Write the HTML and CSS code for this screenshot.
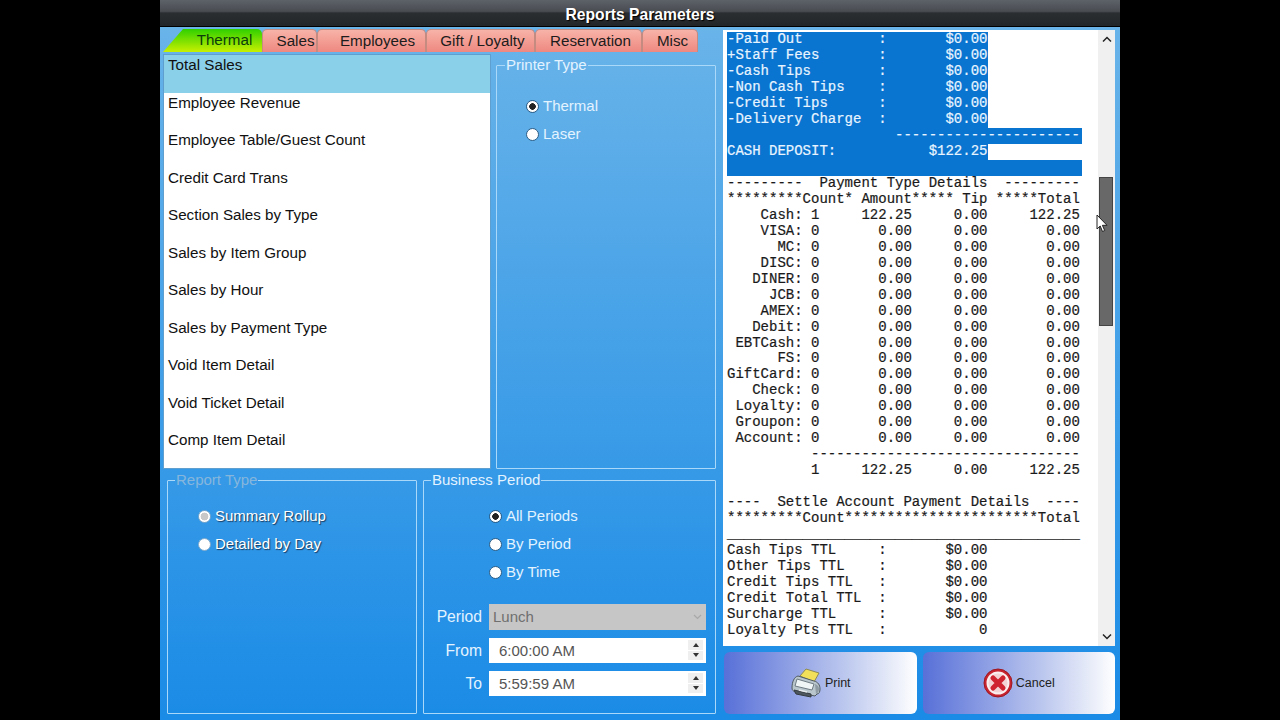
FILE: index.html
```html
<!DOCTYPE html>
<html lang="en">
<head>
    <meta charset="UTF-8">
    <title>Reports Parameters</title>
    <link rel="stylesheet" href="styles.css">
</head>
<body>
    <div class="app">
        <div class="title-bar">Reports Parameters</div>
        <div class="content">
            <div class="left-col">
                <div class="tabs">
                    <div class="tab tab-active">Thermal</div>
                    <div class="tab tab-sales">Sales</div>
                    <div class="tab tab-employees">Employees</div>
                    <div class="tab tab-gift">Gift / Loyalty</div>
                    <div class="tab tab-reservation">Reservation</div>
                    <div class="tab tab-misc">Misc</div>
                </div>
                <div class="top-row">
                    <ul class="report-list">
                        <li class="selected">Total Sales</li>
                        <li>Employee Revenue</li>
                        <li>Employee Table/Guest Count</li>
                        <li>Credit Card Trans</li>
                        <li>Section Sales by Type</li>
                        <li>Sales by Item Group</li>
                        <li>Sales by Hour</li>
                        <li>Sales by Payment Type</li>
                        <li>Void Item Detail</li>
                        <li>Void Ticket Detail</li>
                        <li>Comp Item Detail</li>
                    </ul>
                    <fieldset class="group group-printer">
                        <legend>Printer Type</legend>
                        <div class="radios">
                            <label class="radio"><input type="radio" name="printer" checked>Thermal</label>
                            <label class="radio"><input type="radio" name="printer">Laser</label>
                        </div>
                    </fieldset>
                </div>
                <div class="bottom-row">
                    <fieldset class="group group-report" disabled>
                        <legend>Report Type</legend>
                        <div class="radios">
                            <label class="radio"><input type="radio" name="report" checked>Summary Rollup</label>
                            <label class="radio"><input type="radio" name="report">Detailed by Day</label>
                        </div>
                    </fieldset>
                    <fieldset class="group group-period">
                        <legend>Business Period</legend>
                        <div class="radios">
                            <label class="radio"><input type="radio" name="period" checked>All Periods</label>
                            <label class="radio"><input type="radio" name="period">By Period</label>
                            <label class="radio"><input type="radio" name="period">By Time</label>
                        </div>
                        <div class="period-form">
                            <span class="form-label">Period</span>
                            <div class="select-box">
                                <span>Lunch</span>
                                <svg width="9" height="6" viewBox="0 0 9 6"><path d="M1 1l3.5 3.5L8 1" fill="none" stroke="#a8a8a8" stroke-width="1.2"/></svg>
                            </div>
                            <span class="form-label">From</span>
                            <div class="time-box">
                                <span>6:00:00 AM</span>
                                <div class="spinner"><i class="up"></i><i class="down"></i></div>
                            </div>
                            <span class="form-label">To</span>
                            <div class="time-box">
                                <span>5:59:59 AM</span>
                                <div class="spinner"><i class="up"></i><i class="down"></i></div>
                            </div>
                        </div>
                    </fieldset>
                </div>
            </div>
            <div class="right-col">
                <div class="receipt">
                    <div class="receipt-text"><span class="sel sel-a">-Paid Out         :       $0.00</span>
<span class="sel sel-a">+Staff Fees       :       $0.00</span>
<span class="sel sel-a">-Cash Tips        :       $0.00</span>
<span class="sel sel-a">-Non Cash Tips    :       $0.00</span>
<span class="sel sel-a">-Credit Tips      :       $0.00</span>
<span class="sel sel-a">-Delivery Charge  :       $0.00</span>
<span class="sel sel-b">                    ----------------------</span>
<span class="sel sel-a">CASH DEPOSIT:           $122.25</span>
<span class="sel sel-b"> </span>
---------  Payment Type Details  ---------
*********Count* Amount***** Tip *****Total
    Cash: 1     122.25     0.00     122.25
    VISA: 0       0.00     0.00       0.00
      MC: 0       0.00     0.00       0.00
    DISC: 0       0.00     0.00       0.00
   DINER: 0       0.00     0.00       0.00
     JCB: 0       0.00     0.00       0.00
    AMEX: 0       0.00     0.00       0.00
   Debit: 0       0.00     0.00       0.00
 EBTCash: 0       0.00     0.00       0.00
      FS: 0       0.00     0.00       0.00
GiftCard: 0       0.00     0.00       0.00
   Check: 0       0.00     0.00       0.00
 Loyalty: 0       0.00     0.00       0.00
 Groupon: 0       0.00     0.00       0.00
 Account: 0       0.00     0.00       0.00
          --------------------------------
          1     122.25     0.00     122.25

----  Settle Account Payment Details  ----
*********Count***********************Total
__________________________________________
Cash Tips TTL     :       $0.00
Other Tips TTL    :       $0.00
Credit Tips TTL   :       $0.00
Credit Total TTL  :       $0.00
Surcharge TTL     :       $0.00
Loyalty Pts TTL   :           0</div>
                    <div class="scrollbar">
                        <svg class="arrow" width="10" height="7" viewBox="0 0 10 7"><path d="M1 5.5l4-4 4 4" fill="none" stroke="#222" stroke-width="1.5"/></svg>
                        <div class="track"><div class="thumb"></div></div>
                        <svg class="arrow" width="10" height="7" viewBox="0 0 10 7"><path d="M1 1.5l4 4 4-4" fill="none" stroke="#222" stroke-width="1.5"/></svg>
                    </div>
                    <svg class="cursor" width="12" height="19" viewBox="0 0 12 19"><path d="M1 1v14l3.2-3 2.3 5.5 2.2-1-2.3-5.2H11z" fill="#fff" stroke="#222" stroke-width="1"/></svg>
                </div>
                <div class="buttons">
                    <button class="action-button">
                        <svg width="32" height="30" viewBox="0 0 32 30">
                            <path d="M10 8l6-7 13 4-5 9z" fill="#f2e05a" stroke="#8d8a55"/>
                            <path d="M2 20c0-6 2-11 6-12l16 5c4 1 6 4 6 8 0 3-1 5-3 5l-2 2-20-4c-2-1-3-2-3-4z" fill="#b9c6cc" stroke="#4f5a60"/>
                            <path d="M7 11l17 5-2 6-17-4z" fill="#f0f5f6" stroke="#6f7c83"/>
                            <path d="M4 22l17 4v3L6 26z" fill="#4c565c" stroke="#343b40"/>
                            <path d="M9 22l8 2" stroke="#e6eaec" stroke-width="1.5"/>
                            <path d="M25 16c3 1 4 3 4 5s-1 4-3 5z" fill="#8f9ba2"/>
                        </svg>
                        <span>Print</span>
                    </button>
                    <button class="action-button">
                        <svg width="30" height="30" viewBox="0 0 30 30">
                            <circle cx="15" cy="15" r="14" fill="#c8242f" stroke="#9c1722"/>
                            <circle cx="15" cy="15" r="10.5" fill="#f3d3d3" stroke="#fbeeee" stroke-width="2"/>
                            <path d="M10 10l10 10M20 10L10 20" stroke="#cf2330" stroke-width="5" stroke-linecap="round"/>
                        </svg>
                        <span>Cancel</span>
                    </button>
                </div>
            </div>
        </div>
    </div>
</body>
</html>
```

FILE: styles.css
```css
* {
    box-sizing: border-box;
}

html, body {
    height: 100%;
}

body {
    margin: 0;
    overflow: hidden;
    background-color: #000;
    font-family: "Liberation Sans", Arial, sans-serif;
    font-size: 15px;
}

.app {
    width: 960px;
    height: 720px;
    margin: 0 auto;
    display: flex;
    flex-direction: column;
    background: linear-gradient(to bottom, #6cb5e9 0%, #1a8be6 100%);
}

.title-bar {
    height: 27px;
    flex: none;
    padding-top: 6px;
    color: #fff;
    font-size: 15.7px;
    font-weight: bold;
    line-height: 18px;
    text-align: center;
    text-shadow: 1px 1px 1px #000;
    background: linear-gradient(to bottom, #5d6269 0%, #494c51 42%, #2b2e31 48%, #232628 96%, #000 96%);
}

.content {
    flex: 1;
    display: flex;
    padding: 2px 5px 6px 3px;
}

.left-col {
    width: 554px;
    display: flex;
    flex-direction: column;
}

/* tabs */
.tabs {
    display: flex;
    height: 23px;
    margin-bottom: 2px;
}

.tab {
    height: 23px;
    color: #1c1c1c;
    font-size: 15.2px;
    line-height: 21px;
    text-align: center;
    border: 1px solid #c58a80;
    border-bottom: none;
    border-radius: 5px 5px 0 0;
    background: linear-gradient(to bottom, #f8b3a8 0%, #ee8880 100%);
}

.tab-active {
    width: 99px;
    padding-left: 24px;
    color: #0c3c0c;
    border: none;
    background: linear-gradient(to bottom, #2fd000 0%, #c8f000 100%);
    clip-path: polygon(0 100%, 20px 0, 100% 0, 100% 100%);
}

.tab-sales { width: 55px; padding-left: 12px; }
.tab-employees { width: 109px; padding-left: 12px; }
.tab-gift { width: 109px; padding-left: 4px; }
.tab-reservation { width: 107px; padding-left: 4px; }
.tab-misc { width: 56px; padding-left: 5px; }

.top-row {
    display: flex;
    gap: 5px;
    height: 415px;
}

.report-list {
    width: 328px;
    margin: 0;
    padding: 0;
    list-style: none;
    background-color: #fff;
    border: 1px solid #5f9fd0;
    color: #111;
    font-size: 15.2px;
}

.report-list li {
    height: 37.5px;
    padding: 1px 3px 1px 4px;
    line-height: 18px;
}

.report-list .selected {
    background-color: #8ad0e8;
}

/* group boxes */
.group {
    margin: 0;
    min-width: 0;
    padding: 0;
    border: 1px solid #a9d8f8;
    border-radius: 1px;
    color: #e3f3ff;
}

.group legend {
    margin-left: 8px;
    padding: 0 1px;
    line-height: 18px;
    color: #e3f3ff;
}

.group-printer {
    flex: 1;
    margin-top: 2px;
    margin-right: 1px;
}

.radios {
    display: flex;
    flex-direction: column;
    gap: 10px;
}

.radio {
    display: flex;
    align-items: center;
    height: 18px;
}

.radio input {
    appearance: none;
    width: 13px;
    height: 13px;
    margin: 2px 4px 0 0;
    flex: none;
    background-color: #fff;
    border: 1px solid #2b5c85;
    border-radius: 50%;
}

.radio input:checked {
    background: radial-gradient(circle, #222 0, #222 3px, #fff 3.6px);
}

.group-printer .radios {
    padding: 22px 0 0 29px;
}

.bottom-row {
    display: flex;
    gap: 6px;
    margin-top: 2px;
    height: 243px;
    padding-left: 4px;
}

.bottom-row .group legend {
    margin-left: 7px;
}

.group-report {
    width: 250px;
}

.bottom-row .group-report legend {
    color: #86b6dc;
}

.group-report .radios {
    padding: 17px 0 0 30px;
}

.group-report .radio {
    color: #fff;
    text-shadow: 1px 1px 1px #1a3a5c;
}

.group-report .radio input {
    border-color: #7da9cc;
}

.group-report .radio input:checked {
    background: radial-gradient(circle, #c8c8c8 0, #c8c8c8 3.6px, #fff 4.2px);
}

.group-period {
    width: 293px;
    padding-right: 9px;
}

.group-period .radios {
    padding: 17px 0 0 65px;
}

.period-form {
    display: grid;
    grid-template-columns: 58px 1fr;
    column-gap: 7px;
    row-gap: 8px;
    margin-top: 24px;
    align-items: center;
}

.form-label {
    font-size: 15.7px;
    text-align: right;
}

.select-box {
    height: 26px;
    padding: 0 4px 1px;
    display: flex;
    align-items: center;
    justify-content: space-between;
    color: #6f6f6f;
    background-color: #c6c6c6;
}

.time-box {
    height: 25px;
    padding: 0 3px 1px 10px;
    display: flex;
    align-items: center;
    justify-content: space-between;
    color: #555;
    background-color: #fff;
}

.spinner {
    width: 15px;
    height: 20px;
    display: flex;
    flex-direction: column;
    gap: 1px;
}

.spinner i {
    flex: 1;
    display: flex;
    align-items: center;
    justify-content: center;
    background-color: #efefef;
}

.spinner i::after {
    content: "";
    border-left: 3px solid transparent;
    border-right: 3px solid transparent;
}

.spinner .up::after {
    border-bottom: 4px solid #333;
}

.spinner .down::after {
    border-top: 4px solid #333;
}

/* receipt side */
.right-col {
    width: 392px;
    margin-left: 6px;
    display: flex;
    flex-direction: column;
}

.receipt {
    position: relative;
    height: 616px;
    margin-top: 1px;
    display: flex;
    overflow: hidden;
    background-color: #fff;
}

.receipt-text {
    flex: 1;
    padding: 2px 0 0 4px;
    overflow: hidden;
    color: #1a1a1a;
    font-family: "Liberation Mono", "Courier New", monospace;
    font-size: 14px;
    line-height: 15.95px;
    white-space: pre;
    -webkit-text-stroke: 0.2px currentColor;
}

.sel {
    display: inline-block;
    vertical-align: top;
    height: 16px;
    color: #e8f4ff;
    background-color: #0a75d0;
}

.sel-a { width: 261px; }
.sel-b { width: 355px; }

.scrollbar {
    width: 17px;
    display: flex;
    flex-direction: column;
    align-items: center;
    background-color: #f0f0f0;
}

.arrow {
    flex: none;
    margin: 6px 0;
}

.track {
    flex: 1;
    width: 100%;
}

.thumb {
    height: 149px;
    margin: 128px 2px 0 1px;
    background-color: #686868;
    border: 1px solid #444;
}

.cursor {
    position: absolute;
    left: 373px;
    top: 184px;
}

.buttons {
    display: flex;
    gap: 6px;
    margin-top: 6px;
    padding-left: 1px;
}

.action-button {
    flex: 1;
    height: 62px;
    padding-bottom: 1px;
    display: flex;
    align-items: center;
    justify-content: center;
    gap: 3px;
    border: none;
    border-radius: 6px;
    color: #222;
    font-family: inherit;
    font-size: 12.5px;
    background: linear-gradient(to right, #5870d8 0%, #c0cbef 65%, #fff 100%);
}
```
